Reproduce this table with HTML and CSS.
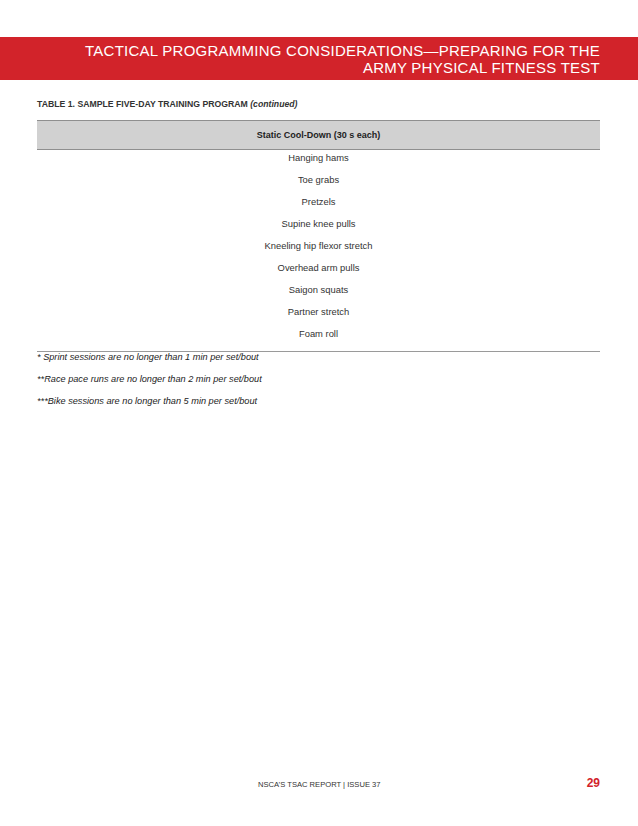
FILE: index.html
```html
<!DOCTYPE html>
<html lang="en">
<head>
<meta charset="utf-8">
<title>Tactical Programming Considerations</title>
<link rel="stylesheet" href="styles.css">
</head>
<body>
<div class="page">
  <header class="band">
    <h1 class="band-title">TACTICAL PROGRAMMING CONSIDERATIONS—PREPARING FOR THE<br>ARMY PHYSICAL FITNESS TEST</h1>
  </header>
  <main class="content">
    <p class="caption">TABLE 1. SAMPLE FIVE-DAY TRAINING PROGRAM <em>(continued)</em></p>
    <table class="program">
      <thead>
        <tr><th>Static Cool-Down (30 s each)</th></tr>
      </thead>
      <tbody>
        <tr><td>Hanging hams</td></tr>
        <tr><td>Toe grabs</td></tr>
        <tr><td>Pretzels</td></tr>
        <tr><td>Supine knee pulls</td></tr>
        <tr><td>Kneeling hip flexor stretch</td></tr>
        <tr><td>Overhead arm pulls</td></tr>
        <tr><td>Saigon squats</td></tr>
        <tr><td>Partner stretch</td></tr>
        <tr class="last"><td>Foam roll</td></tr>
      </tbody>
    </table>
    <div class="notes">
      <p>* Sprint sessions are no longer than 1 min per set/bout</p>
      <p>**Race pace runs are no longer than 2 min per set/bout</p>
      <p>***Bike sessions are no longer than 5 min per set/bout</p>
    </div>
  </main>
  <footer class="footer">
    <span class="footer-text">NSCA’S TSAC REPORT | ISSUE 37</span>
    <span class="page-num">29</span>
  </footer>
</div>
</body>
</html>
```
FILE: styles.css
```css
html, body {
  margin: 0;
  padding: 0;
  background: #ffffff;
}
body {
  font-family: "Liberation Sans", Arial, sans-serif;
  color: #2b2b2b;
}
.page {
  width: 638px;
  min-height: 826px;
  display: flex;
  flex-direction: column;
}
.band {
  margin-top: 37px;
  height: 43px;
  box-sizing: border-box;
  padding: 5px 38px 0 0;
  background: #d2232a;
}
.band-title {
  margin: 0;
  font-family: "Liberation Sans", Arial, sans-serif;
  font-weight: normal;
  font-size: 15px;
  line-height: 17px;
  letter-spacing: 0.25px;
  text-align: right;
  color: #ffffff;
}
.content {
  padding: 0 38px 0 37px;
}
.caption {
  margin: 19px 0 0;
  font-size: 8.7px;
  line-height: 10px;
  font-weight: bold;
  color: #333333;
}
.caption em {
  font-style: italic;
}
.program {
  margin-top: 11px;
  width: 100%;
  border-collapse: collapse;
  border-bottom: 1px solid #9a9a9a;
}
.program th {
  height: 28px;
  padding: 0;
  background: #d1d1d1;
  border-top: 1px solid #8f8f8f;
  border-bottom: 1px solid #8f8f8f;
  font-size: 9px;
  font-weight: bold;
  color: #222222;
  text-align: center;
}
.program td {
  padding: 0 0 6px;
  line-height: 16px;
  font-size: 9.4px;
  text-align: center;
  color: #333333;
}
.program tr.last td {
  padding-bottom: 9px;
}
.notes p {
  margin: 0;
  font-size: 9.2px;
  line-height: 22px;
  font-style: italic;
  color: #222222;
}
.notes p:first-child {
  line-height: 10px;
  margin-bottom: 6px;
}
.footer {
  margin-top: auto;
  margin-bottom: 36px;
  display: flex;
  align-items: baseline;
  padding: 0 38px 0 258px;
}
.footer-text {
  font-size: 7.6px;
  color: #333333;
}
.page-num {
  margin-left: auto;
  font-size: 12px;
  font-weight: bold;
  color: #d2232a;
}
```
